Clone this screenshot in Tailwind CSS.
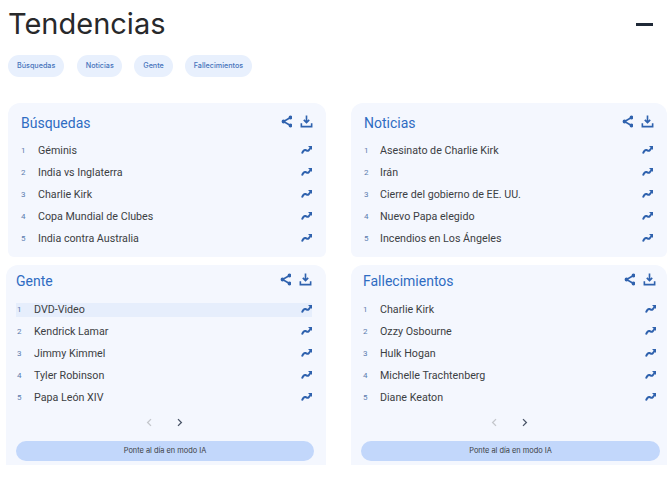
<!DOCTYPE html>
<html lang="es">

<head>
  <meta charset="UTF-8">
  <title>Tendencias</title>
  <script src="https://cdn.jsdelivr.net/npm/@tailwindcss/browser@4"></script>
</head>

<body class="bg-white font-['Roboto',sans-serif] w-[667px] h-[500px] overflow-hidden">
  <!-- Cabecera -->
  <header class="flex justify-between items-center pl-2 pr-[14px] pt-[5px] h-[43px]">
    <h1 class="font-['Inter',sans-serif] text-[29px] leading-[38px] text-[#28292b]">Tendencias</h1>
    <span class="block w-[17px] h-[3px] bg-[#1f2937]"></span>
  </header>

  <!-- Filtros -->
  <nav class="flex gap-[12px] pl-2 mt-[12px] h-[22px] font-['Inter',sans-serif] text-[7.2px] font-medium text-[#4673bb]">
    <span class="flex items-center mr-[1px] px-[9px] rounded-full bg-[#e8f0fd]">Búsquedas</span>
    <span class="flex items-center px-[8.500px] rounded-full bg-[#e8f0fd]">Noticias</span>
    <span class="flex items-center px-[9px] rounded-full bg-[#e8f0fd]">Gente</span>
    <span class="flex items-center px-[9px] rounded-full bg-[#e8f0fd]">Fallecimientos</span>
  </nav>

  <main class="grid grid-cols-[326px_316px] gap-x-[25px] mt-[26px]">
    <!-- Búsquedas -->
    <section class="ml-2 h-[154px] pl-[13px] pr-[13px] pt-[10px] rounded-t-xl rounded-b-md bg-[#f4f7fe]">
      <div class="flex justify-between items-start h-[20px]">
        <h2 class="text-[14px] leading-[20px] text-[#2f6cc2]">Búsquedas</h2>
        <div class="flex items-center gap-[8px] mt-[2px] text-[#2f62ae]">
          <svg class="w-[11px] h-[13px]" viewBox="0 0 22 26" fill="none" stroke="currentColor" stroke-width="3.200"><path d="M19 5 5 13l14 8" /><circle cx="19" cy="5" r="2.200" fill="currentColor" /><circle cx="5" cy="13" r="2.200" fill="currentColor" /><circle cx="19" cy="21" r="2.200" fill="currentColor" /></svg>
          <svg class="w-[13px] h-[13px]" viewBox="0 0 24 24" fill="none" stroke="currentColor" stroke-width="3"><path d="M12 1v12M7 9l5 5 5-5M2.500 15v6.500h19V15" /></svg>
        </div>
      </div>
      <ol class="mt-[7px] text-[10.700px] text-[#3c4043]">
        <li class="flex items-center h-[22px]"><span class="w-[17px] text-[8px] text-[#5b7cae]">1</span><span class="flex-1">Géminis</span><svg class="w-[11px] h-[8px] mb-[2px] mr-[1px] text-[#2f62ae]" viewBox="0 0 22 16" fill="none" stroke="currentColor" stroke-width="4"><path d="M2 15C4 10 6 7 9 8s4 3 6 1 3-4 5-6" /><path d="M14 0h8v8z" fill="currentColor" stroke="none" /></svg></li>
        <li class="flex items-center h-[22px]"><span class="w-[17px] text-[8px] text-[#5b7cae]">2</span><span class="flex-1">India vs Inglaterra</span><svg class="w-[11px] h-[8px] mb-[2px] mr-[1px] text-[#2f62ae]" viewBox="0 0 22 16" fill="none" stroke="currentColor" stroke-width="4"><path d="M2 15C4 10 6 7 9 8s4 3 6 1 3-4 5-6" /><path d="M14 0h8v8z" fill="currentColor" stroke="none" /></svg></li>
        <li class="flex items-center h-[22px]"><span class="w-[17px] text-[8px] text-[#5b7cae]">3</span><span class="flex-1">Charlie Kirk</span><svg class="w-[11px] h-[8px] mb-[2px] mr-[1px] text-[#2f62ae]" viewBox="0 0 22 16" fill="none" stroke="currentColor" stroke-width="4"><path d="M2 15C4 10 6 7 9 8s4 3 6 1 3-4 5-6" /><path d="M14 0h8v8z" fill="currentColor" stroke="none" /></svg></li>
        <li class="flex items-center h-[22px]"><span class="w-[17px] text-[8px] text-[#5b7cae]">4</span><span class="flex-1">Copa Mundial de Clubes</span><svg class="w-[11px] h-[8px] mb-[2px] mr-[1px] text-[#2f62ae]" viewBox="0 0 22 16" fill="none" stroke="currentColor" stroke-width="4"><path d="M2 15C4 10 6 7 9 8s4 3 6 1 3-4 5-6" /><path d="M14 0h8v8z" fill="currentColor" stroke="none" /></svg></li>
        <li class="flex items-center h-[22px]"><span class="w-[17px] text-[8px] text-[#5b7cae]">5</span><span class="flex-1">India contra Australia</span><svg class="w-[11px] h-[8px] mb-[2px] mr-[1px] text-[#2f62ae]" viewBox="0 0 22 16" fill="none" stroke="currentColor" stroke-width="4"><path d="M2 15C4 10 6 7 9 8s4 3 6 1 3-4 5-6" /><path d="M14 0h8v8z" fill="currentColor" stroke="none" /></svg></li>
      </ol>
    </section>

    <!-- Noticias -->
    <section class="h-[154px] pl-[13px] pr-[13px] pt-[10px] rounded-t-xl rounded-b-md bg-[#f4f7fe]">
      <div class="flex justify-between items-start h-[20px]">
        <h2 class="text-[14px] leading-[20px] text-[#2f6cc2]">Noticias</h2>
        <div class="flex items-center gap-[8px] mt-[2px] text-[#2f62ae]">
          <svg class="w-[11px] h-[13px]" viewBox="0 0 22 26" fill="none" stroke="currentColor" stroke-width="3.200"><path d="M19 5 5 13l14 8" /><circle cx="19" cy="5" r="2.200" fill="currentColor" /><circle cx="5" cy="13" r="2.200" fill="currentColor" /><circle cx="19" cy="21" r="2.200" fill="currentColor" /></svg>
          <svg class="w-[13px] h-[13px]" viewBox="0 0 24 24" fill="none" stroke="currentColor" stroke-width="3"><path d="M12 1v12M7 9l5 5 5-5M2.500 15v6.500h19V15" /></svg>
        </div>
      </div>
      <ol class="mt-[7px] text-[10.700px] text-[#3c4043]">
        <li class="flex items-center h-[22px]"><span class="w-[16px] text-[8px] text-[#5b7cae]">1</span><span class="flex-1">Asesinato de Charlie Kirk</span><svg class="w-[11px] h-[8px] mb-[2px] mr-[1px] text-[#2f62ae]" viewBox="0 0 22 16" fill="none" stroke="currentColor" stroke-width="4"><path d="M2 15C4 10 6 7 9 8s4 3 6 1 3-4 5-6" /><path d="M14 0h8v8z" fill="currentColor" stroke="none" /></svg></li>
        <li class="flex items-center h-[22px]"><span class="w-[16px] text-[8px] text-[#5b7cae]">2</span><span class="flex-1">Irán</span><svg class="w-[11px] h-[8px] mb-[2px] mr-[1px] text-[#2f62ae]" viewBox="0 0 22 16" fill="none" stroke="currentColor" stroke-width="4"><path d="M2 15C4 10 6 7 9 8s4 3 6 1 3-4 5-6" /><path d="M14 0h8v8z" fill="currentColor" stroke="none" /></svg></li>
        <li class="flex items-center h-[22px]"><span class="w-[16px] text-[8px] text-[#5b7cae]">3</span><span class="flex-1">Cierre del gobierno de EE. UU.</span><svg class="w-[11px] h-[8px] mb-[2px] mr-[1px] text-[#2f62ae]" viewBox="0 0 22 16" fill="none" stroke="currentColor" stroke-width="4"><path d="M2 15C4 10 6 7 9 8s4 3 6 1 3-4 5-6" /><path d="M14 0h8v8z" fill="currentColor" stroke="none" /></svg></li>
        <li class="flex items-center h-[22px]"><span class="w-[16px] text-[8px] text-[#5b7cae]">4</span><span class="flex-1">Nuevo Papa elegido</span><svg class="w-[11px] h-[8px] mb-[2px] mr-[1px] text-[#2f62ae]" viewBox="0 0 22 16" fill="none" stroke="currentColor" stroke-width="4"><path d="M2 15C4 10 6 7 9 8s4 3 6 1 3-4 5-6" /><path d="M14 0h8v8z" fill="currentColor" stroke="none" /></svg></li>
        <li class="flex items-center h-[22px]"><span class="w-[16px] text-[8px] text-[#5b7cae]">5</span><span class="flex-1">Incendios en Los Ángeles</span><svg class="w-[11px] h-[8px] mb-[2px] mr-[1px] text-[#2f62ae]" viewBox="0 0 22 16" fill="none" stroke="currentColor" stroke-width="4"><path d="M2 15C4 10 6 7 9 8s4 3 6 1 3-4 5-6" /><path d="M14 0h8v8z" fill="currentColor" stroke="none" /></svg></li>
      </ol>
    </section>

    <!-- Gente -->
    <section class="ml-[6px] mt-[8px] h-[200px] pl-[10px] pr-[14px] pt-[6px] rounded-t-xl bg-[#f4f7fe]">
      <div class="flex justify-between items-start h-[20px]">
        <h2 class="text-[14px] leading-[20px] text-[#2f6cc2]">Gente</h2>
        <div class="flex items-center gap-[8px] mt-[2px] text-[#2f62ae]">
          <svg class="w-[11px] h-[13px]" viewBox="0 0 22 26" fill="none" stroke="currentColor" stroke-width="3.200"><path d="M19 5 5 13l14 8" /><circle cx="19" cy="5" r="2.200" fill="currentColor" /><circle cx="5" cy="13" r="2.200" fill="currentColor" /><circle cx="19" cy="21" r="2.200" fill="currentColor" /></svg>
          <svg class="w-[13px] h-[13px]" viewBox="0 0 24 24" fill="none" stroke="currentColor" stroke-width="3"><path d="M12 1v12M7 9l5 5 5-5M2.500 15v6.500h19V15" /></svg>
        </div>
      </div>
      <ol class="mt-[8px] text-[10.700px] text-[#3c4043]">
        <li class="flex items-center h-[22px]"><div class="flex items-center w-full h-[14px] bg-[#e6eefc]"><span class="w-[18px] pl-[1px] text-[8px] text-[#5b7cae]">1</span><span class="flex-1">DVD-Video</span><svg class="w-[11px] h-[8px] mb-[2px] text-[#2f62ae]" viewBox="0 0 22 16" fill="none" stroke="currentColor" stroke-width="4"><path d="M2 15C4 10 6 7 9 8s4 3 6 1 3-4 5-6" /><path d="M14 0h8v8z" fill="currentColor" stroke="none" /></svg></div></li>
        <li class="flex items-center h-[22px]"><span class="w-[18px] pl-[1px] text-[8px] text-[#5b7cae]">2</span><span class="flex-1">Kendrick Lamar</span><svg class="w-[11px] h-[8px] mb-[2px] text-[#2f62ae]" viewBox="0 0 22 16" fill="none" stroke="currentColor" stroke-width="4"><path d="M2 15C4 10 6 7 9 8s4 3 6 1 3-4 5-6" /><path d="M14 0h8v8z" fill="currentColor" stroke="none" /></svg></li>
        <li class="flex items-center h-[22px]"><span class="w-[18px] pl-[1px] text-[8px] text-[#5b7cae]">3</span><span class="flex-1">Jimmy Kimmel</span><svg class="w-[11px] h-[8px] mb-[2px] text-[#2f62ae]" viewBox="0 0 22 16" fill="none" stroke="currentColor" stroke-width="4"><path d="M2 15C4 10 6 7 9 8s4 3 6 1 3-4 5-6" /><path d="M14 0h8v8z" fill="currentColor" stroke="none" /></svg></li>
        <li class="flex items-center h-[22px]"><span class="w-[18px] pl-[1px] text-[8px] text-[#5b7cae]">4</span><span class="flex-1">Tyler Robinson</span><svg class="w-[11px] h-[8px] mb-[2px] text-[#2f62ae]" viewBox="0 0 22 16" fill="none" stroke="currentColor" stroke-width="4"><path d="M2 15C4 10 6 7 9 8s4 3 6 1 3-4 5-6" /><path d="M14 0h8v8z" fill="currentColor" stroke="none" /></svg></li>
        <li class="flex items-center h-[22px]"><span class="w-[18px] pl-[1px] text-[8px] text-[#5b7cae]">5</span><span class="flex-1">Papa León XIV</span><svg class="w-[11px] h-[8px] mb-[2px] text-[#2f62ae]" viewBox="0 0 22 16" fill="none" stroke="currentColor" stroke-width="4"><path d="M2 15C4 10 6 7 9 8s4 3 6 1 3-4 5-6" /><path d="M14 0h8v8z" fill="currentColor" stroke="none" /></svg></li>
      </ol>
      <div class="flex justify-center gap-[21px] mt-[6px] h-[14px] items-center">
        <svg class="w-[9px] h-[9px] text-[#c4c7cc]" viewBox="0 0 24 24" fill="none" stroke="currentColor" stroke-width="3.500"><path d="M16 3 7 12l9 9" /></svg>
        <svg class="w-[9px] h-[9px] text-[#4a5568]" viewBox="0 0 24 24" fill="none" stroke="currentColor" stroke-width="3.500"><path d="m8 3 9 9-9 9" /></svg>
      </div>
      <div class="flex justify-center items-center h-[20px] -mr-[2px] mt-[12px] rounded-full bg-[#c2d7fb] font-['Inter',sans-serif] text-[7.400px] text-[#3c4043]">Ponte al día en modo IA</div>
    </section>

    <!-- Fallecimientos -->
    <section class="mt-[8px] h-[200px] pl-[12px] pr-[11px] pt-[6px] rounded-t-xl bg-[#f4f7fe]">
      <div class="flex justify-between items-start h-[20px]">
        <h2 class="text-[14px] leading-[20px] text-[#2f6cc2]">Fallecimientos</h2>
        <div class="flex items-center gap-[8px] mt-[2px] text-[#2f62ae]">
          <svg class="w-[11px] h-[13px]" viewBox="0 0 22 26" fill="none" stroke="currentColor" stroke-width="3.200"><path d="M19 5 5 13l14 8" /><circle cx="19" cy="5" r="2.200" fill="currentColor" /><circle cx="5" cy="13" r="2.200" fill="currentColor" /><circle cx="19" cy="21" r="2.200" fill="currentColor" /></svg>
          <svg class="w-[13px] h-[13px]" viewBox="0 0 24 24" fill="none" stroke="currentColor" stroke-width="3"><path d="M12 1v12M7 9l5 5 5-5M2.500 15v6.500h19V15" /></svg>
        </div>
      </div>
      <ol class="mt-[8px] text-[10.700px] text-[#3c4043]">
        <li class="flex items-center h-[22px]"><span class="w-[17px] text-[8px] text-[#5b7cae]">1</span><span class="flex-1">Charlie Kirk</span><svg class="w-[11px] h-[8px] mb-[2px] text-[#2f62ae]" viewBox="0 0 22 16" fill="none" stroke="currentColor" stroke-width="4"><path d="M2 15C4 10 6 7 9 8s4 3 6 1 3-4 5-6" /><path d="M14 0h8v8z" fill="currentColor" stroke="none" /></svg></li>
        <li class="flex items-center h-[22px]"><span class="w-[17px] text-[8px] text-[#5b7cae]">2</span><span class="flex-1">Ozzy Osbourne</span><svg class="w-[11px] h-[8px] mb-[2px] text-[#2f62ae]" viewBox="0 0 22 16" fill="none" stroke="currentColor" stroke-width="4"><path d="M2 15C4 10 6 7 9 8s4 3 6 1 3-4 5-6" /><path d="M14 0h8v8z" fill="currentColor" stroke="none" /></svg></li>
        <li class="flex items-center h-[22px]"><span class="w-[17px] text-[8px] text-[#5b7cae]">3</span><span class="flex-1">Hulk Hogan</span><svg class="w-[11px] h-[8px] mb-[2px] text-[#2f62ae]" viewBox="0 0 22 16" fill="none" stroke="currentColor" stroke-width="4"><path d="M2 15C4 10 6 7 9 8s4 3 6 1 3-4 5-6" /><path d="M14 0h8v8z" fill="currentColor" stroke="none" /></svg></li>
        <li class="flex items-center h-[22px]"><span class="w-[17px] text-[8px] text-[#5b7cae]">4</span><span class="flex-1">Michelle Trachtenberg</span><svg class="w-[11px] h-[8px] mb-[2px] text-[#2f62ae]" viewBox="0 0 22 16" fill="none" stroke="currentColor" stroke-width="4"><path d="M2 15C4 10 6 7 9 8s4 3 6 1 3-4 5-6" /><path d="M14 0h8v8z" fill="currentColor" stroke="none" /></svg></li>
        <li class="flex items-center h-[22px]"><span class="w-[17px] text-[8px] text-[#5b7cae]">5</span><span class="flex-1">Diane Keaton</span><svg class="w-[11px] h-[8px] mb-[2px] text-[#2f62ae]" viewBox="0 0 22 16" fill="none" stroke="currentColor" stroke-width="4"><path d="M2 15C4 10 6 7 9 8s4 3 6 1 3-4 5-6" /><path d="M14 0h8v8z" fill="currentColor" stroke="none" /></svg></li>
      </ol>
      <div class="flex justify-center gap-[21px] mt-[6px] h-[14px] items-center">
        <svg class="w-[9px] h-[9px] text-[#c4c7cc]" viewBox="0 0 24 24" fill="none" stroke="currentColor" stroke-width="3.500"><path d="M16 3 7 12l9 9" /></svg>
        <svg class="w-[9px] h-[9px] text-[#4a5568]" viewBox="0 0 24 24" fill="none" stroke="currentColor" stroke-width="3.500"><path d="m8 3 9 9-9 9" /></svg>
      </div>
      <div class="flex justify-center items-center h-[20px] -ml-[2px] -mr-[4px] mt-[12px] rounded-full bg-[#c2d7fb] font-['Inter',sans-serif] text-[7.400px] text-[#3c4043]">Ponte al día en modo IA</div>
    </section>
  </main>
</body>

</html>
